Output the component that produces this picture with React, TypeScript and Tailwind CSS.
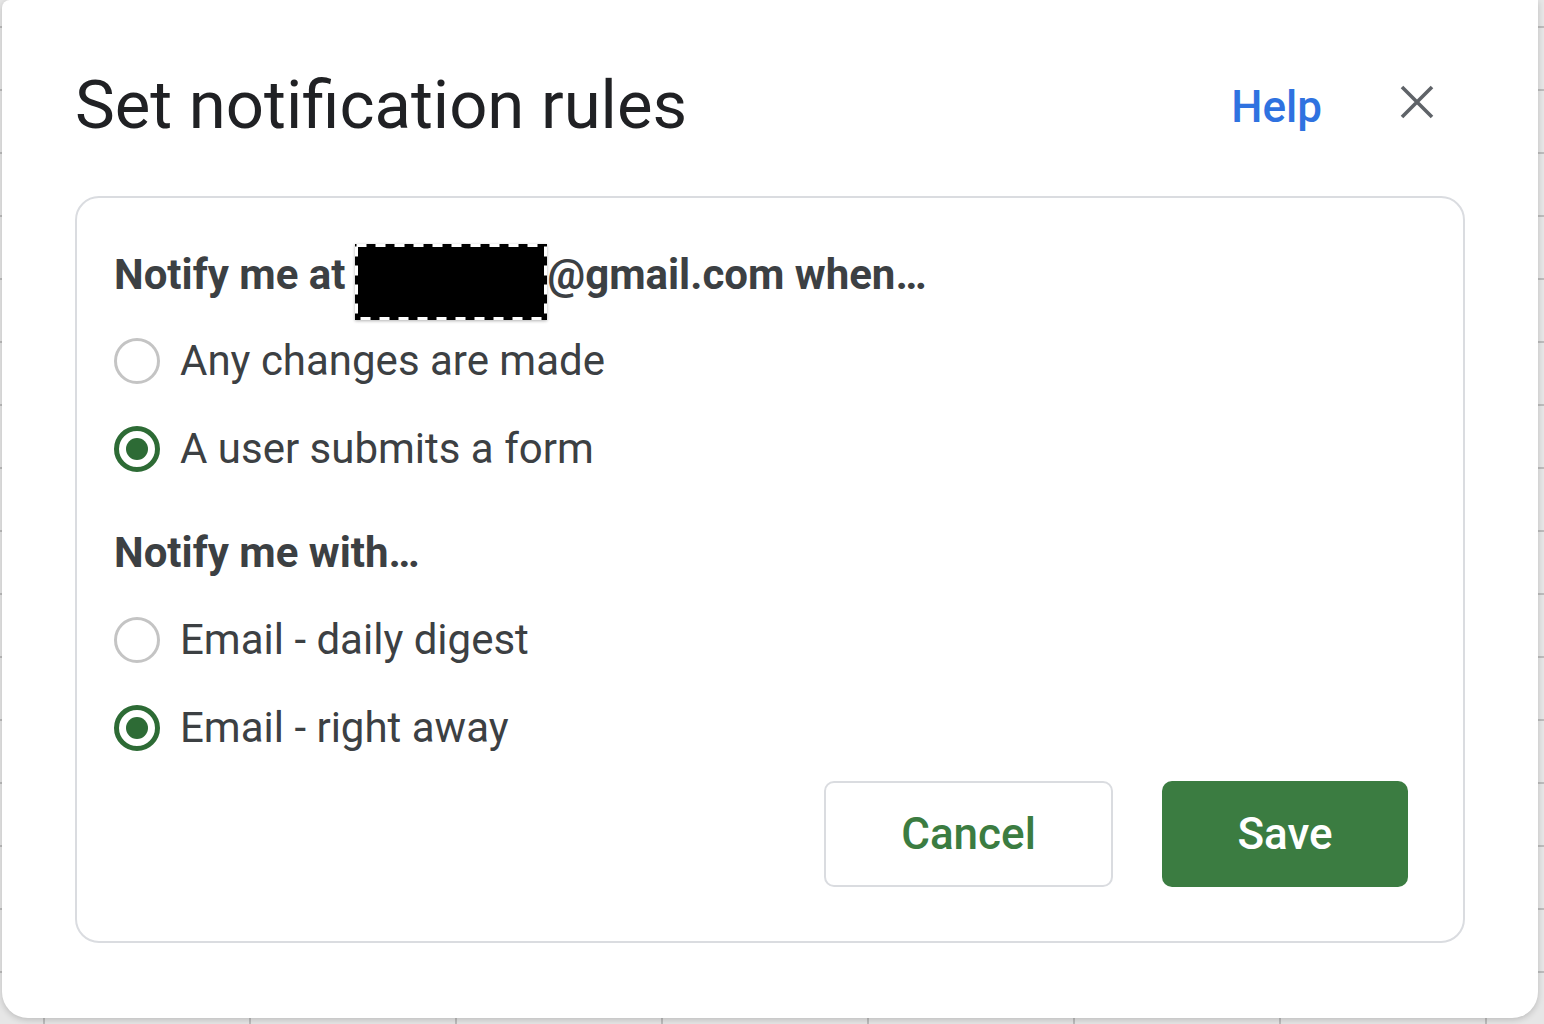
import { useState } from "react";

type RadioProps = {
  label: string;
  checked: boolean;
  onSelect: () => void;
};

function Radio({ label, checked, onSelect }: RadioProps) {
  return (
    <button
      type="button"
      onClick={onSelect}
      className="flex h-[88px] items-center gap-[20px] text-left"
    >
      {checked ? (
        <span className="flex h-[46px] w-[46px] items-center justify-center rounded-full border-[5px] border-[#2d6b35]">
          <span className="h-[22px] w-[22px] rounded-full bg-[#2d6b35]" />
        </span>
      ) : (
        <span className="h-[46px] w-[46px] rounded-full border-[3px] border-[#c4c4c4]" />
      )}
      <span className="text-[42px] leading-[50px] text-[#3c4043]">{label}</span>
    </button>
  );
}

// blacked-out address, white dashes round the edge
function Redacted() {
  return (
    <span className="mt-[14px] ml-[10px] h-[76px] w-[192px] shrink-0 bg-black shadow-[0_1px_3px_rgba(0,0,0,0.3)]">
      <svg width="192" height="76" viewBox="0 0 192 76" className="block">
        <rect
          x="1.5"
          y="1.5"
          width="189"
          height="73"
          fill="none"
          stroke="#fff"
          strokeWidth="3"
          strokeDasharray="10 9"
        />
      </svg>
    </span>
  );
}

export default function App() {
  const [when, setWhen] = useState("form");
  const [how, setHow] = useState("now");

  return (
    <div className="h-[1024px] w-[1544px] overflow-hidden bg-[#e6e6e6] bg-[repeating-linear-gradient(to_bottom,transparent_0,transparent_26px,#bdbdbd_26px,#bdbdbd_28px,transparent_28px,transparent_63px),repeating-linear-gradient(to_right,transparent_0,transparent_43px,#bdbdbd_43px,#bdbdbd_45px,transparent_45px,transparent_206px)] font-['Roboto','Liberation_Sans',sans-serif]">
      <div className="ml-[2px] flex h-[1018px] w-[1536px] flex-col rounded-b-[26px] rounded-tl-[8px] bg-white px-[73px] shadow-[0_2px_6px_rgba(0,0,0,0.18)]">
        <header className="mt-[65px] flex h-[80px] items-center justify-between">
          <h1 className="text-[67px] leading-[80px] text-[#202124]">
            Set notification rules
          </h1>
          <div className="flex items-center gap-[78px] pr-[31px]">
            <a className="mt-[4px] text-[44px] font-medium text-[#2f72e0]">
              Help
            </a>
            <svg
              width="34"
              height="34"
              viewBox="0 0 34 34"
              className="mt-[-6px]"
            >
              <path
                d="M2 2L32 32M32 2L2 32"
                stroke="#5f6368"
                strokeWidth="3.6"
                strokeLinecap="butt"
              />
            </svg>
          </div>
        </header>

        <section className="mt-[51px] flex flex-col rounded-[24px] border-2 border-[#dadce0] pl-[37px] pr-[55px] pt-[52px] pb-[54px]">
          <div className="flex h-[50px] items-center text-[42px] font-bold leading-[50px] text-[#3c4043]">
            <span>Notify me at</span>
            <Redacted />
            <span>@gmail.com when…</span>
          </div>

          <div className="mt-[17px] flex flex-col">
            <Radio
              label="Any changes are made"
              checked={when === "any"}
              onSelect={() => setWhen("any")}
            />
            <Radio
              label="A user submits a form"
              checked={when === "form"}
              onSelect={() => setWhen("form")}
            />
          </div>

          <p className="mt-[35px] text-[42px] font-bold leading-[50px] text-[#3c4043]">
            Notify me with…
          </p>

          <div className="mt-[18px] flex flex-col">
            <Radio
              label="Email - daily digest"
              checked={how === "daily"}
              onSelect={() => setHow("daily")}
            />
            <Radio
              label="Email - right away"
              checked={how === "now"}
              onSelect={() => setHow("now")}
            />
          </div>

          <div className="mt-[9px] flex justify-end gap-[49px]">
            <button
              type="button"
              className="h-[106px] w-[289px] rounded-[10px] border-2 border-[#dadce0] bg-white text-[44px] font-medium text-[#3b7c41]"
            >
              Cancel
            </button>
            <button
              type="button"
              className="h-[106px] w-[246px] rounded-[10px] bg-[#3b7c41] text-[44px] font-medium text-white"
            >
              Save
            </button>
          </div>
        </section>
      </div>
    </div>
  );
}
